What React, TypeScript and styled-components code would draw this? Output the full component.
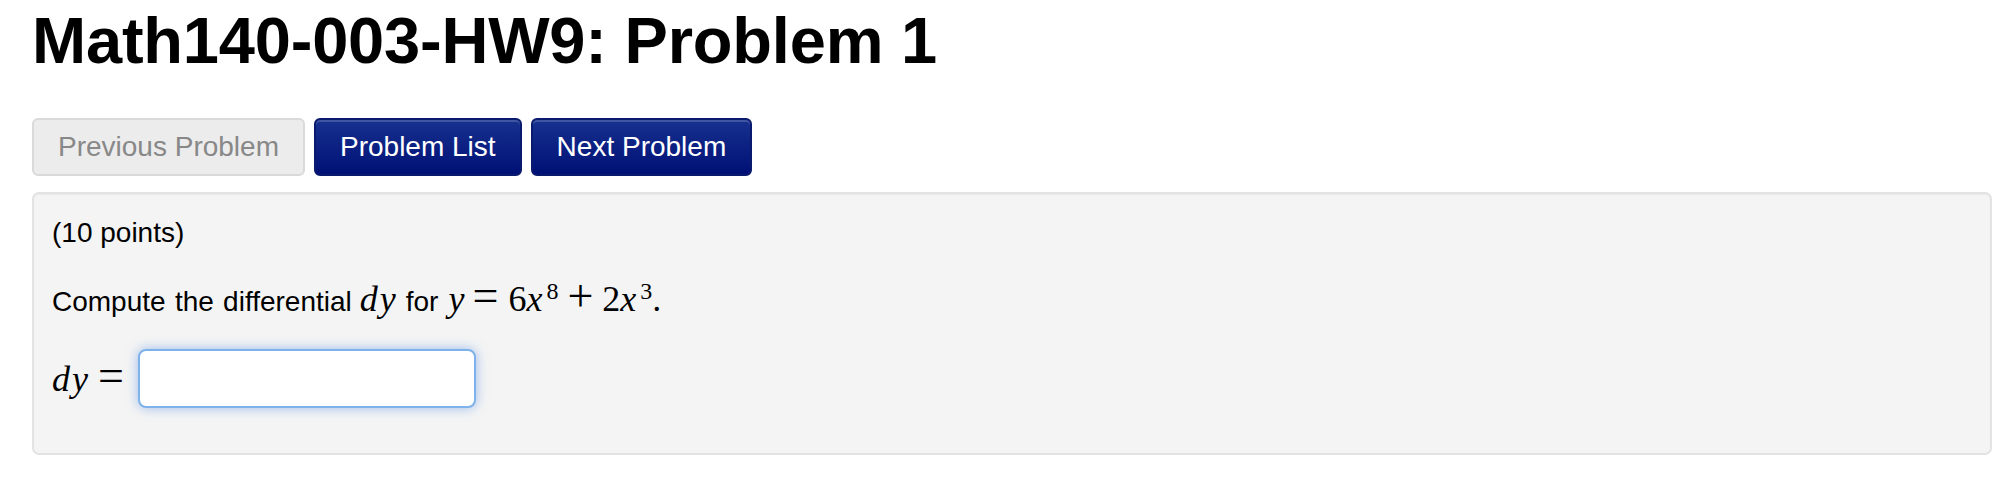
import React from "react";
import styled, { createGlobalStyle } from "styled-components";

const Global = createGlobalStyle`
  html, body { margin: 0; padding: 0; background: #ffffff; }
  body { font-family: "Liberation Sans", Arial, Helvetica, sans-serif; color: #000; }
`;

const Page = styled.div`
  padding: 5px 7px 0 32px;
  display: flex;
  flex-direction: column;
`;

const Title = styled.h1`
  margin: 0;
  font-family: "Liberation Sans", Arial, Helvetica, sans-serif;
  font-weight: 700;
  font-size: 65px;
  line-height: 72px;
  letter-spacing: -0.2px;
  color: #000;
`;

const Nav = styled.div`
  display: flex;
  gap: 9px;
  margin-top: 41px;
`;

const NavButton = styled.button<{ $disabled?: boolean }>`
  height: 58px;
  padding: 0 24px;
  border-radius: 6px;
  font-family: "Liberation Sans", Arial, Helvetica, sans-serif;
  font-size: 28px;
  line-height: 40px;
  cursor: ${(p) => (p.$disabled ? "default" : "pointer")};
  ${(p) =>
    p.$disabled
      ? `
    background: #ececec;
    color: #888888;
    border: 2px solid #dadada;
  `
      : `
    background: linear-gradient(#17318f, #001076);
    color: #ffffff;
    border: 2px solid #0a1a6e;
    box-shadow: inset 0 2px 0 rgba(255,255,255,0.18);
  `}
`;

const Well = styled.div`
  margin-top: 16px;
  background: #f4f4f4;
  border: 2px solid #e3e3e3;
  border-radius: 7px;
  padding: 19px 18px 45px 18px;
  height: 263px;
  box-sizing: border-box;
  box-shadow: inset 0 1px 1px rgba(0, 0, 0, 0.04);
`;

const Para = styled.p<{ $gap?: number; $ws?: number }>`
  margin: ${(p) => p.$gap ?? 0}px 0 0 0;
  font-size: 28px;
  line-height: 40px;
  white-space: nowrap;
  word-spacing: ${(p) => p.$ws ?? 0}px;
`;

const Math = styled.span<{ $ml?: number; $mr?: number }>`
  font-family: "Liberation Serif", "Times New Roman", serif;
  font-size: 36px;
  line-height: 0;
  white-space: nowrap;
  word-spacing: 0;
  margin-left: ${(p) => p.$ml ?? 0}px;
  margin-right: ${(p) => p.$mr ?? 0}px;
`;

const V = styled.i<{ $mr?: number }>`
  font-style: italic;
  margin-right: ${(p) => p.$mr ?? 0}px;
`;

const Sup = styled.span<{ $ml?: number }>`
  font-size: 24px;
  line-height: 0;
  vertical-align: 12px;
  margin-left: ${(p) => p.$ml ?? 0}px;
`;

const Op = styled.span<{ $l: number; $r: number }>`
  font-size: 46px;
  line-height: 0;
  margin-left: ${(p) => p.$l}px;
  margin-right: ${(p) => p.$r}px;
`;

const AnswerRow = styled.div`
  margin-top: 27px;
  display: flex;
  align-items: center;
  gap: 14px;
`;

const AnswerLabel = styled(Math)`
  line-height: 40px;
`;

const Answer = styled.input`
  width: 338px;
  height: 59px;
  box-sizing: border-box;
  border: 2px solid #7eb2ea;
  border-radius: 8px;
  background: #fff;
  box-shadow: 0 0 12px rgba(82, 140, 230, 0.55);
  outline: none;
  font-size: 28px;
  padding: 0 12px;
`;

export default function App() {
  return (
    <>
      <Global />
      <Page>
        <Title>Math140-003-HW9: Problem 1</Title>
        <Nav>
          <NavButton $disabled>Previous Problem</NavButton>
          <NavButton>Problem List</NavButton>
          <NavButton>Next Problem</NavButton>
        </Nav>
        <Well>
          <Para>(10 points)</Para>
          <Para $gap={29} $ws={1.5}>
            Compute the differential
            <Math $ml={8} $mr={10}>
              <V $mr={2}>d</V>
              <V>y</V>
            </Math>
            for
            <Math $ml={10}>
              <V>y</V>
              <Op $l={8} $r={10}>=</Op>6<V $mr={2}>x</V>
              <Sup $ml={2}>8</Sup>
              <Op $l={9} $r={9}>+</Op>2<V $mr={2}>x</V>
              <Sup $ml={2}>3</Sup>.
            </Math>
          </Para>
          <AnswerRow>
            <AnswerLabel>
              <V $mr={2}>d</V>
              <V>y</V>
              <Op $l={10} $r={0}>=</Op>
            </AnswerLabel>
            <Answer type="text" aria-label="dy" />
          </AnswerRow>
        </Well>
      </Page>
    </>
  );
}
